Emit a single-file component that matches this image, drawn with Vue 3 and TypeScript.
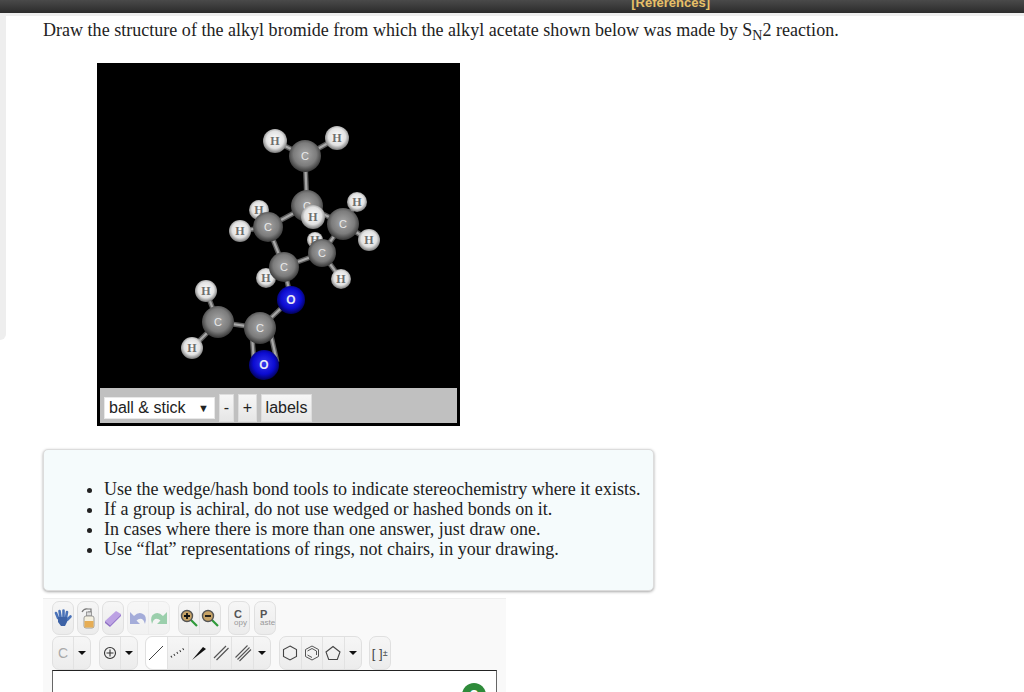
<script setup lang="ts">
interface Atom { l: string; x: number; y: number; r: number }
const bonds: number[][] = [
  [305,156,275,141],[305,156,337,138],[305,156,307,206],[307,206,268,227],[307,206,343,224],
  [343,224,357,202],[343,224,369,240],[343,224,322,253],[268,227,259,210],[268,227,240,231],
  [268,227,284,267],[322,253,284,267],[322,253,315,240],[322,253,341,279],[284,267,266,278],
  [284,267,291,299],[291,299,260,328],[260,328,218,322],[218,322,206,291],[218,322,192,348],
  [252,335,254,362],[271,335,277,362]
]
const atoms: Atom[] = [
  {l:'H',x:275,y:141,r:12},{l:'H',x:337,y:138,r:12},{l:'C',x:305,y:156,r:16},
  {l:'H',x:259,y:210,r:10},{l:'C',x:307,y:206,r:16},{l:'H',x:357,y:202,r:10},
  {l:'C',x:343,y:224,r:16},{l:'H',x:369,y:240,r:11},{l:'C',x:268,y:227,r:15},
  {l:'H',x:240,y:231,r:11},{l:'H',x:313,y:217,r:12},{l:'H',x:315,y:240,r:8},
  {l:'C',x:322,y:253,r:14},{l:'H',x:341,y:279,r:10},{l:'H',x:266,y:278,r:10},
  {l:'C',x:284,y:267,r:15},{l:'O',x:291,y:300,r:14},{l:'H',x:206,y:291,r:11},
  {l:'H',x:192,y:348,r:11},{l:'C',x:218,y:322,r:16},{l:'C',x:260,y:328,r:16},{l:'O',x:264,y:365,r:15}
]
const fill = (l: string): string => l === 'H' ? 'url(#gh)' : l === 'C' ? 'url(#gc)' : 'url(#go)'
const hints = [
  'Use the wedge/hash bond tools to indicate stereochemistry where it exists.',
  'If a group is achiral, do not use wedged or hashed bonds on it.',
  'In cases where there is more than one answer, just draw one.',
  'Use “flat” representations of rings, not chairs, in your drawing.'
]
</script>

<template>
  <div class="page">
    <header class="topbar"><span class="refs">[References]</span></header>
    <div class="under"></div>
    <div class="side"></div>
    <main class="content">
      <p class="question">Draw the structure of the alkyl bromide from which the alkyl acetate shown below was made by S<sub>N</sub>2 reaction.</p>

      <div class="viewer">
        <svg class="mol" width="357" height="323" viewBox="100 65 357 323">
          <defs>
            <radialGradient id="gh" cx="0.5" cy="0.45" r="0.55">
              <stop offset="0" stop-color="#ffffff"/><stop offset="0.65" stop-color="#e2e2e2"/><stop offset="1" stop-color="#777"/>
            </radialGradient>
            <radialGradient id="gc" cx="0.5" cy="0.45" r="0.55">
              <stop offset="0" stop-color="#a6a6a6"/><stop offset="0.65" stop-color="#7c7c7c"/><stop offset="1" stop-color="#353535"/>
            </radialGradient>
            <radialGradient id="go" cx="0.5" cy="0.45" r="0.55">
              <stop offset="0" stop-color="#3636ee"/><stop offset="0.65" stop-color="#0b0bd0"/><stop offset="1" stop-color="#020258"/>
            </radialGradient>
          </defs>
          <g v-for="(b, i) in bonds" :key="i">
            <line :x1="b[0]" :y1="b[1]" :x2="b[2]" :y2="b[3]" class="bond"/>
            <line :x1="b[0]" :y1="b[1]" :x2="b[2]" :y2="b[3]" class="bondhi"/>
          </g>
          <g v-for="(a, i) in atoms" :key="'a' + i">
            <circle :cx="a.x" :cy="a.y" :r="a.r" :fill="fill(a.l)"/>
            <text :x="a.x" :y="a.y + 4" text-anchor="middle" :class="['lbl', a.l === 'H' ? 'lh' : a.l === 'C' ? 'lc' : 'lo']">{{ a.l }}</text>
          </g>
        </svg>
        <div class="ctrl">
          <div class="select"><span>ball &amp; stick</span><span class="tri">▼</span></div>
          <button class="vbtn small">-</button>
          <button class="vbtn plus">+</button>
          <button class="vbtn lab">labels</button>
        </div>
      </div>

      <section class="card">
        <ul><li v-for="h in hints" :key="h">{{ h }}</li></ul>
      </section>

      <section class="editor">
        <div class="row">
          <div class="grp"><span class="b">
            <svg width="20" height="20" viewBox="0 0 20 20"><path d="M5 10 L3 5 M7.500 9 L6.500 3 M10.500 9 L10.500 2.500 M13 10 L14 4 M14 12 L17.500 8.500" stroke="#4a72b8" stroke-width="2.600" stroke-linecap="round"/><path d="M5 9 H14 V14 L12 18 H8 L5 14Z" fill="#3d62a6"/></svg>
          </span></div>
          <div class="grp"><span class="b">
            <svg width="20" height="24" viewBox="0 0 20 24"><path d="M4 6 Q6 2 10 3 H13 V6 H10" fill="none" stroke="#777" stroke-width="1.200"/><rect x="8.500" y="6" width="5" height="4" fill="#ddd" stroke="#888" stroke-width=".8"/><rect x="6" y="10" width="10" height="12" rx="2" fill="#f4f0e0" stroke="#888" stroke-width=".8"/><rect x="6.500" y="15" width="9" height="6.500" fill="#e6ad55"/></svg>
          </span></div>
          <div class="grp"><span class="b">
            <svg width="20" height="20" viewBox="0 0 20 20"><path d="M2 13 L13 3 L18 6 L7 17Z" fill="#bda2e4"/><path d="M2 13 L7 17 L7 19 L2 15Z" fill="#8f6fc4"/><path d="M7 17 L18 6 V8 L7 19Z" fill="#9a7bd0"/></svg>
          </span></div>
          <div class="grp faded">
            <span class="b"><svg width="20" height="18" viewBox="0 0 20 18"><path d="M2 3 V15 H12 L8.500 11.500 Q11 9 14 10 Q16 11 17 15 Q20 7 14 4.500 Q10 3 6 7Z" fill="#5f6fc0"/></svg></span>
            <span class="b"><svg width="20" height="18" viewBox="0 0 20 18"><path d="M18 3 V15 H8 L11.500 11.500 Q9 9 6 10 Q4 11 3 15 Q0 7 6 4.500 Q10 3 14 7Z" fill="#4fae6e"/></svg></span>
          </div>
          <div class="grp g1">
            <span class="b"><svg width="20" height="20" viewBox="0 0 20 20"><line x1="11" y1="11" x2="18" y2="18" stroke="#2f9a3a" stroke-width="2.200"/><circle cx="8" cy="8" r="5.500" fill="#c9a466" stroke="#555" stroke-width="1.400"/><path d="M5 8 H11 M8 5 V11" stroke="#111" stroke-width="1.800"/></svg></span>
            <span class="b"><svg width="20" height="20" viewBox="0 0 20 20"><line x1="11" y1="11" x2="18" y2="18" stroke="#2f9a3a" stroke-width="2.200"/><circle cx="8" cy="8" r="5.500" fill="#c9a466" stroke="#555" stroke-width="1.400"/><path d="M5 8 H11" stroke="#111" stroke-width="1.800"/></svg></span>
          </div>
          <div class="grp g2"><span class="b tx"><b>C</b><i>opy</i></span></div>
          <div class="grp g5"><span class="b tx"><b>P</b><i>aste</i></span></div>
        </div>

        <div class="row r2">
          <div class="grp">
            <span class="b c">C</span><span class="b arrow"><em></em></span>
          </div>
          <div class="grp">
            <span class="b"><svg width="16" height="16" viewBox="0 0 16 16"><circle cx="8" cy="8" r="5.500" fill="none" stroke="#333" stroke-width="1.100"/><path d="M4.500 8 H11.500 M8 4.500 V11.500" stroke="#333" stroke-width="1.100"/></svg></span><span class="b arrow"><em></em></span>
          </div>
          <div class="grp wide g6">
            <span class="b active"><svg width="20" height="20" viewBox="0 0 20 20"><line x1="3" y1="17" x2="17" y2="3" stroke="#444" stroke-width="1"/></svg></span>
            <span class="b"><svg width="20" height="20" viewBox="0 0 20 20"><line x1="3" y1="14" x2="17" y2="5" stroke="#333" stroke-width="2" stroke-dasharray="1 2.500"/></svg></span>
            <span class="b"><svg width="20" height="20" viewBox="0 0 20 20"><path d="M3 17 L14 4 L17 6Z" fill="#111"/></svg></span>
            <span class="b"><svg width="20" height="20" viewBox="0 0 20 20"><path d="M3 15 L15 3 M5.500 17 L17.500 5" stroke="#555" stroke-width="1.200"/></svg></span>
            <span class="b"><svg width="20" height="20" viewBox="0 0 20 20"><path d="M2.500 14.500 L14.500 2.500 M4.500 16.500 L16.500 4.500 M6.500 18 L18 6.500" stroke="#555" stroke-width="1.100"/></svg></span>
            <span class="b arrow"><em></em></span>
          </div>
          <div class="grp wide">
            <span class="b"><svg width="18" height="20" viewBox="0 0 18 20"><path d="M9 3 L15.500 6.500 V13.500 L9 17 L2.500 13.500 V6.500Z" fill="none" stroke="#444" stroke-width="1.100"/></svg></span>
            <span class="b"><svg width="18" height="20" viewBox="0 0 18 20"><path d="M9 3 L15.500 6.500 V13.500 L9 17 L2.500 13.500 V6.500Z M9 5.500 L13.500 8 V12 M9 14.500 L4.500 12 M4.500 8 L9 5.500" fill="none" stroke="#555" stroke-width="1"/></svg></span>
            <span class="b"><svg width="18" height="20" viewBox="0 0 18 20"><path d="M9 3.500 L16 9 L13.300 16.500 H4.700 L2 9Z" fill="none" stroke="#444" stroke-width="1.100"/></svg></span>
            <span class="b arrow"><em></em></span>
          </div>
          <div class="grp g6"><span class="b br">[ ]<sup>±</sup></span></div>
        </div>

        <div class="canvas"><span class="help">?</span></div>
      </section>
    </main>
  </div>
</template>

<style scoped>
.page { position: relative; width: 1024px; height: 692px; overflow: hidden; background: #fff; font-family: "Liberation Serif", serif; color: #222; }
.topbar { height: 13px; background: linear-gradient(#4a4a4a, #2b2b2b); display: flex; justify-content: flex-end; overflow: hidden; padding-right: 314px; }
.refs { font: bold 13px/1 "Liberation Sans", sans-serif; color: #e8c068; margin-top: -4px; }
.under { height: 3px; background: #eeeeee; }
.side { position: absolute; left: 0; top: 13px; width: 6px; height: 327px; background: #eeeeee; border-bottom-right-radius: 6px; }
.content { padding-left: 43px; }
.question { margin: 0; font-size: 18px; line-height: 28px; height: 47px; letter-spacing: .022px; }
.question sub { font-size: 14px; line-height: 0; vertical-align: -4px; }
.viewer { margin-left: 54px; width: 363px; height: 363px; box-sizing: border-box; background: #000; border: solid #000; border-width: 2px 3px 3px 3px; display: flex; flex-direction: column; }
.mol { display: block; flex: none; }
.ctrl { flex: 1; background: #c0c0c0; display: flex; align-items: center; padding: 5px 0 0 4px; font: 16px "Liberation Sans", sans-serif; color: #222; }
.select { width: 111px; height: 22px; box-sizing: border-box; background: #fff; border: 1px solid #e8e8e8; display: flex; justify-content: space-between; align-items: center; padding: 0 5px 0 4px; }
.tri { font-size: 11px; }
.vbtn { height: 28px; box-sizing: border-box; background: linear-gradient(#f6f6f6, #e6e6e6); border: 1px solid #ddd; padding: 0; font: 16px "Liberation Sans", sans-serif; color: #222; }
.small { width: 15px; margin-left: 4px; }
.plus { width: 19px; margin-left: 4px; }
.lab { width: 51px; margin-left: 4px; }
.card { margin-top: 23px; width: 611px; height: 142px; box-sizing: border-box; background: #f5fbfc; border: 1px solid #dcdcdc; border-radius: 5px; box-shadow: 0 1px 3px rgba(0,0,0,.35); padding-top: 29px; font-size: 18px; line-height: 20px; letter-spacing: .015px; }
.card ul { margin: 0; padding-left: 60px; }
.editor { margin-top: 7px; width: 463px; height: 94px; box-sizing: border-box; background: #f9f9f9; border-top: 1px solid #eee; padding: 2px 0 0 9px; }
.row { display: flex; gap: 3px; height: 34px; }
.r2 { margin-top: 1px; gap: 8px; }
.grp { display: flex; height: 34px; background: linear-gradient(#f6f6f6, #ececec); border: 1px solid #e0e0e0; border-radius: 7px; box-sizing: border-box; }
.b { width: 21px; box-sizing: border-box; display: flex; align-items: center; justify-content: center; border-right: 1px solid #e2e2e2; font-family: "Liberation Sans", sans-serif; }
.grp .b:last-child { border-right: 0; width: 20px; }
.grp .b.arrow, .grp .b.arrow:last-child { width: 16px; }
.wide .b { width: 21.6px; }
.faded { opacity: .55; }
.g1 { margin-left: 5px; }
.g2 { margin-left: 4px; }
.g5 { margin-left: 1px; }
.g6 { margin-left: -1px; }
.tx { flex-direction: column; align-items: flex-start; padding-left: 5px; font-size: 8px; color: #999; line-height: 8px; }
.tx b { font-size: 11px; line-height: 10px; color: #555; }
.tx i { font-style: normal; }
.c { font-size: 14px; color: #aaa; }
.arrow em { border: solid transparent; border-width: 4px 4px 0; border-top-color: #111; width: 0; height: 0; }
.active { background: #fff; border-radius: 7px 0 0 7px; }
.br { font-size: 13px; color: #444; white-space: nowrap; }
.br sup { font-size: 9px; line-height: 0; }
.canvas { position: relative; width: 445px; height: 60px; box-sizing: border-box; background: #fff; border: 1px solid #222; border-left-color: #666; border-right-color: #666; }
.help { position: absolute; left: 409px; top: 12px; width: 24px; height: 24px; border-radius: 50%; background: #2e8b3a; color: #fff; font: bold 14px/24px "Liberation Sans", sans-serif; text-align: center; }
.bond { stroke: #5e5e5e; stroke-width: 5; }
.bondhi { stroke: #a8a8a8; stroke-width: 2.2; }
.lbl { font-size: 11px; }
.lh { font-family: "Liberation Serif", serif; font-weight: bold; font-size: 12px; fill: #6e6e6e; }
.lc { font-family: "Liberation Sans", sans-serif; fill: #eaeaea; }
.lo { font-family: "Liberation Sans", sans-serif; font-weight: bold; fill: #e8e8f8; font-size: 12px; }
</style>

<style>
html, body { margin: 0; background: #fff; }
</style>
